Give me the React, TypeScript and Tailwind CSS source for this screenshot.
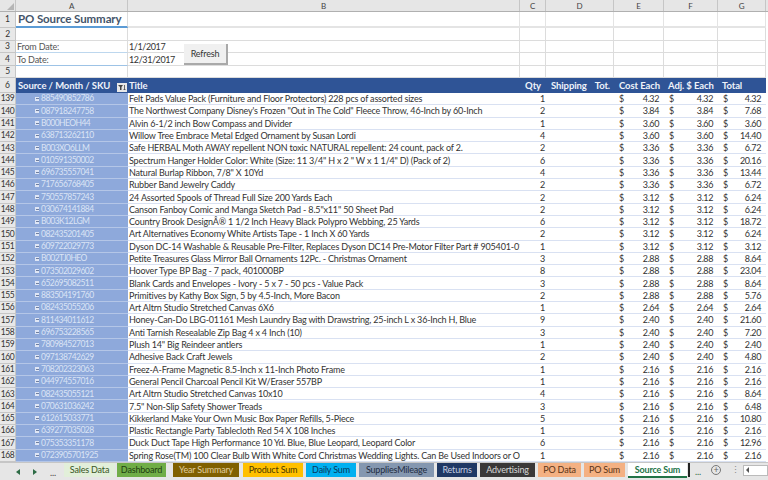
const cols = 'grid grid-cols-[16px_112px_392px_26px_68px_50px_54px_48px_2px]'

const rows: [number, string, string, number, string, string][] = [
  [139, '885490852786', 'Felt Pads Value Pack (Furniture and Floor Protectors) 228 pcs of assorted sizes', 1, '4.32', '4.32'],
  [140, '087918247758', 'The Northwest Company Disney\'s Frozen "Out in The Cold" Fleece Throw, 46-Inch by 60-Inch', 2, '3.84', '7.68'],
  [141, 'B000HEOH44', 'Alvin 6-1/2 inch Bow Compass and Divider', 1, '3.60', '3.60'],
  [142, '638713262110', 'Willow Tree Embrace Metal Edged Ornament by Susan Lordi', 4, '3.60', '14.40'],
  [143, 'B003XO6LLM', 'Safe HERBAL Moth AWAY repellent NON toxic NATURAL repellent: 24 count, pack of 2.', 2, '3.36', '6.72'],
  [144, '010591350002', 'Spectrum Hanger Holder Color: White (Size: 11 3/4" H x 2 " W x 1 1/4" D) (Pack of 2)', 6, '3.36', '20.16'],
  [145, '696735557041', 'Natural Burlap Ribbon, 7/8" X 10Yd', 4, '3.36', '13.44'],
  [146, '717656768405', 'Rubber Band Jewelry Caddy', 2, '3.36', '6.72'],
  [147, '750557857243', '24 Assorted Spools of Thread Full Size 200 Yards Each', 2, '3.12', '6.24'],
  [148, '030674141884', 'Canson Fanboy Comic and Manga Sketch Pad - 8.5"x11" 50 Sheet Pad', 2, '3.12', '6.24'],
  [149, 'B003K12LGM', 'Country Brook DesignÂ® 1 1/2 Inch Heavy Black Polypro Webbing, 25 Yards', 6, '3.12', '18.72'],
  [150, '082435201405', 'Art Alternatives Economy White Artists Tape - 1 Inch X 60 Yards', 2, '3.12', '6.24'],
  [151, '609722029773', 'Dyson DC-14 Washable & Reusable Pre-Filter, Replaces Dyson DC14 Pre-Motor Filter Part # 905401-01 (90', 1, '3.12', '3.12'],
  [152, 'B002TJ0HEO', 'Petite Treasures Glass Mirror Ball Ornaments 12Pc. - Christmas Ornament', 3, '2.88', '8.64'],
  [153, '073502029602', 'Hoover Type BP Bag - 7 pack, 401000BP', 8, '2.88', '23.04'],
  [154, '652695082511', 'Blank Cards and Envelopes - Ivory - 5 x 7 - 50 pcs - Value Pack', 3, '2.88', '8.64'],
  [155, '883504191760', 'Primitives by Kathy Box Sign, 5 by 4.5-Inch, More Bacon', 2, '2.88', '5.76'],
  [156, '082435055206', 'Art Altrn Studio Stretched Canvas 6X6', 1, '2.64', '2.64'],
  [157, '811434011612', 'Honey-Can-Do LBG-01161 Mesh Laundry Bag with Drawstring, 25-inch L x 36-Inch H, Blue', 9, '2.40', '21.60'],
  [158, '696753228565', 'Anti Tarnish Resealable Zip Bag 4 x 4 Inch (10)', 3, '2.40', '7.20'],
  [159, '780984527013', 'Plush 14" Big Reindeer antlers', 1, '2.40', '2.40'],
  [160, '097138742629', 'Adhesive Back Craft Jewels', 2, '2.40', '4.80'],
  [161, '708202323063', 'Freez-A-Frame Magnetic 8.5-Inch x 11-Inch Photo Frame', 1, '2.16', '2.16'],
  [162, '044974557016', 'General Pencil Charcoal Pencil Kit W/Eraser 557BP', 1, '2.16', '2.16'],
  [163, '082435055121', 'Art Altrn Studio Stretched Canvas 10x10', 4, '2.16', '8.64'],
  [164, '070631036242', '7.5" Non-Slip Safety Shower Treads', 3, '2.16', '6.48'],
  [165, '612615033771', 'Kikkerland Make Your Own Music Box Paper Refills, 5-Piece', 5, '2.16', '10.80'],
  [166, '639277035028', 'Plastic Rectangle Party Tablecloth Red 54 X 108 Inches', 1, '2.16', '2.16'],
  [167, '075353351178', 'Duck Duct Tape High Performance 10 Yd. Blue, Blue Leopard, Leopard Color', 6, '2.16', '12.96'],
  [168, '0723905701925', 'Spring Rose(TM) 100 Clear Bulb With White Cord Christmas Wedding Lights. Can Be Used Indoors or Outdoors', 1, '2.16', '2.16'],
]

const tabs = [
  { name: 'Sales Data', cls: 'w-[51px] bg-[#e2efda] text-[#375623]' },
  { name: 'Dashboard', cls: 'w-[49px] -ml-[1px] bg-[#70ad47] text-[#1e3d10]' },
  { name: 'Year Summary', cls: 'w-[66px] ml-[4px] bg-[#806000] text-[#e0cf9f]' },
  { name: 'Product Sum', cls: 'w-[60px] ml-[1px] bg-[#ffc000] text-[#4a3800]' },
  { name: 'Daily Sum', cls: 'w-[50px] bg-[#00b0f0] text-[#07385a]' },
  { name: 'SuppliesMileage', cls: 'w-[75px] bg-[#8497b0] text-[#1f2c3f]' },
  { name: 'Returns', cls: 'w-[40px] bg-[#1f3864] text-[#c5cfe2]' },
  { name: 'Advertising', cls: 'w-[55px] bg-[#3a3838] text-[#d8d8d8]' },
  { name: 'PO Data', cls: 'w-[43px] bg-[#f4b183] text-[#5a3316]' },
  { name: 'PO Sum', cls: 'w-[41px] bg-[#f4b183] text-[#5a3316]' },
]

function ColHead({ label }: { label: string }) {
  return (
    <div className="flex items-center justify-center border-r border-[#c6c6c6] text-[8px] text-[#444]">{label}</div>
  )
}

function BlankRow({ num, h }: { num: number; h: string }) {
  return (
    <div className={`${cols} ${h}`}>
      <div className="flex items-center justify-center border-r border-b border-[#c6c6c6] bg-[#e8e8e8] text-[8.5px] tracking-[-0.4px] text-[#333]">{num}</div>
      <div className="border-r border-b border-[#dcdcdc]" />
      <div className="border-r border-b border-[#dcdcdc]" />
      <div className="border-r border-b border-[#dcdcdc]" />
      <div className="border-r border-b border-[#dcdcdc]" />
      <div className="border-r border-b border-[#dcdcdc]" />
      <div className="border-r border-b border-[#dcdcdc]" />
      <div className="border-r border-b border-[#dcdcdc]" />
      <div />
    </div>
  )
}

function Money({ v }: { v: string }) {
  return (
    <div className="flex items-center justify-between border-b border-[#d9e1f2] pl-[5px] pr-[5px] tracking-[-0.4px]">
      <span>$</span>
      <span>{v}</span>
    </div>
  )
}

export default function App() {
  return (
    <div className="relative flex h-[480px] w-[768px] flex-col overflow-hidden bg-white font-['Lato',sans-serif] text-[9px] leading-none tracking-[-0.18px] text-[#333]">
      {/* column letters */}
      <div className={`${cols} h-[12px] border-b border-[#b0b0b0] bg-[#e6e6e6]`}>
        <div className="relative border-r border-[#c6c6c6]">
          <div className="absolute bottom-[1px] right-[1px] h-0 w-0 border-b-[7px] border-l-[7px] border-b-[#b5b5b5] border-l-transparent" />
        </div>
        <ColHead label="A" />
        <ColHead label="B" />
        <ColHead label="C" />
        <ColHead label="D" />
        <ColHead label="E" />
        <ColHead label="F" />
        <ColHead label="G" />
      </div>

      {/* title block */}
      <div className={`${cols} h-[16px]`}>
        <div className="flex items-center justify-center border-r border-b border-[#c6c6c6] bg-[#e8e8e8] text-[8.5px]">1</div>
        <div className="flex items-center overflow-hidden whitespace-nowrap border-r border-b-2 border-r-[#dcdcdc] border-b-[#5b9bd5] pl-[2px] text-[11.5px] font-bold tracking-[-0.1px] text-[#44546a]">PO Source Summary</div>
        <div className="border-r border-b-2 border-[#e4e4e4]" />
        <div className="border-r border-b-2 border-[#e4e4e4]" />
        <div className="border-r border-b-2 border-[#e4e4e4]" />
        <div className="border-r border-b-2 border-[#e4e4e4]" />
        <div className="border-r border-b-2 border-[#e4e4e4]" />
        <div className="border-r border-b-2 border-[#e4e4e4]" />
        <div />
      </div>
      <BlankRow num={2} h="h-[13px]" />
      <div className={`${cols} h-[12px]`}>
        <div className="flex items-center justify-center border-r border-b border-[#c6c6c6] bg-[#e8e8e8] text-[8.5px]">3</div>
        <div className="flex items-center border-r border-b border-r-[#dcdcdc] border-b-[#bdd7ee] pl-[1px] text-[#555]">From Date:</div>
        <div className="flex items-center border-r border-b border-[#dcdcdc] pl-[1px] tracking-[-0.4px]">1/1/2017</div>
        <div className="border-r border-b border-[#dcdcdc]" />
        <div className="border-r border-b border-[#dcdcdc]" />
        <div className="border-r border-b border-[#dcdcdc]" />
        <div className="border-r border-b border-[#dcdcdc]" />
        <div className="border-r border-b border-[#dcdcdc]" />
        <div />
      </div>
      <div className={`${cols} h-[13px]`}>
        <div className="flex items-center justify-center border-r border-b border-[#c6c6c6] bg-[#e8e8e8] text-[8.5px]">4</div>
        <div className="flex items-center border-r border-b border-r-[#dcdcdc] border-b-[#9dc3e6] pl-[1px] text-[#555]">To Date:</div>
        <div className="flex items-center border-r border-b border-[#dcdcdc] pl-[1px] tracking-[-0.4px]">12/31/2017</div>
        <div className="border-r border-b border-[#dcdcdc]" />
        <div className="border-r border-b border-[#dcdcdc]" />
        <div className="border-r border-b border-[#dcdcdc]" />
        <div className="border-r border-b border-[#dcdcdc]" />
        <div className="border-r border-b border-[#dcdcdc]" />
        <div />
      </div>
      <BlankRow num={5} h="h-[12px]" />

      {/* table header */}
      <div className={`${cols} h-[15px] whitespace-nowrap text-[9.5px] font-bold tracking-[-0.1px] text-[#eef2fa]`}>
        <div className="flex items-center justify-center border-r border-b border-[#c6c6c6] bg-[#e8e8e8] text-[8.5px] font-normal text-[#333]">6</div>
        <div className="relative flex items-center bg-[#2f5496] pl-[2px]">
          Source / Month / SKU
          <div className="absolute right-[1px] top-[5px] flex h-[9px] w-[10px] items-center justify-center bg-[#e8e8e8]">
            <svg width="8" height="7" viewBox="0 0 8 7">
              <path d="M0 1h5L3.5 3v3H2V3z" fill="#444" />
              <path d="M6.5 1v5M5.5 5l1 1 1-1" stroke="#444" strokeWidth="0.8" fill="none" />
            </svg>
          </div>
        </div>
        <div className="flex items-center bg-[#2f5496] pl-[1px]">Title</div>
        <div className="flex items-center justify-end bg-[#2f5496] pr-[5px]">Qty</div>
        <div className="flex items-center justify-between bg-[#2f5496] pl-[5px] pr-[4px]">
          <span>Shipping</span>
          <span>Tot.</span>
        </div>
        <div className="flex items-center bg-[#2f5496] pl-[5px]">Cost Each</div>
        <div className="flex items-center bg-[#2f5496] pl-[4px]">Adj. $ Each</div>
        <div className="flex items-center bg-[#2f5496] pl-[4px]">Total</div>
        <div />
      </div>

      {/* data */}
      <div className="flex flex-col">
        {rows.map(([n, sku, title, qty, cost, total]) => (
          <div key={n} className={`${cols} h-[12.3px]`}>
            <div className="flex items-center justify-center border-r border-b border-[#c6c6c6] bg-[#e8e8e8] text-[8.5px] tracking-[-0.4px]">{n}</div>
            <div className="flex items-center border-b border-[#b4c6e7] bg-[#8ea9db] pl-[19px] text-[8.5px] tracking-[-0.55px] text-[#dbe4f5]">
              <span className="mr-[2px] flex h-[4px] w-[4px] items-center justify-center bg-[#dfe6f5]">
                <span className="h-[1px] w-[3px] bg-[#6f7f9f]" />
              </span>
              {sku}
            </div>
            <div className="flex items-center overflow-hidden whitespace-nowrap border-b border-[#d9e1f2] pl-[1px]">{title}</div>
            <div className="flex items-center justify-end border-b border-[#d9e1f2] pr-[1px]">{qty}</div>
            <div className="border-b border-[#d9e1f2]" />
            <Money v={cost} />
            <Money v={cost} />
            <Money v={total} />
            <div />
          </div>
        ))}
      </div>

      {/* sheet tabs */}
      <div className="relative flex h-[18px] flex-1 items-start gap-[3px] border-t border-[#c6c6c6] bg-[#e6e6e6] pl-[64px] text-[9px]">
        <div className="absolute left-[16px] top-[5px] flex items-center gap-[13px]">
          <span className="h-0 w-0 border-y-[3px] border-r-[4px] border-y-transparent border-r-[#2d6b45]" />
          <span className="h-0 w-0 border-y-[3px] border-l-[4px] border-y-transparent border-l-[#2d6b45]" />
          <span className="text-[9px] text-[#444]">...</span>
        </div>
        {tabs.map((t) => (
          <div key={t.name} className={`flex h-[14px] shrink-0 items-center justify-center ${t.cls}`}>{t.name}</div>
        ))}
        <div className="flex h-[15px] w-[59px] shrink-0 items-center justify-center border-b-2 border-[#217346] bg-white font-bold text-[#217346]">Source Sum</div>
        <div className="-ml-[2px] h-[14px] w-[2px] shrink-0 bg-[#222]" />
        <div className="absolute left-[695px] top-[4px] text-[#2d6b45]">...</div>
        <div className="absolute left-[711px] top-[2px] flex h-[10px] w-[10px] items-center justify-center rounded-full border border-[#777] text-[9px] text-[#666]">+</div>
        <div className="absolute left-[731px] top-[2px] text-[#888]">⋮</div>
        <div className="absolute left-[743px] top-[2px] flex h-[11px] w-[25px] items-center border border-[#bbb] bg-white">
          <span className="ml-[2px] h-0 w-0 border-y-[3px] border-r-[3px] border-y-transparent border-r-[#555]" />
        </div>
      </div>

      {/* refresh button */}
      <div className="absolute left-[184px] top-[44px] flex h-[21px] w-[44px] items-center justify-center border-r-2 border-b-2 border-[#a9a9a9] bg-[#f0f0f0] text-[9px] text-[#333]">Refresh</div>
    </div>
  )
}
